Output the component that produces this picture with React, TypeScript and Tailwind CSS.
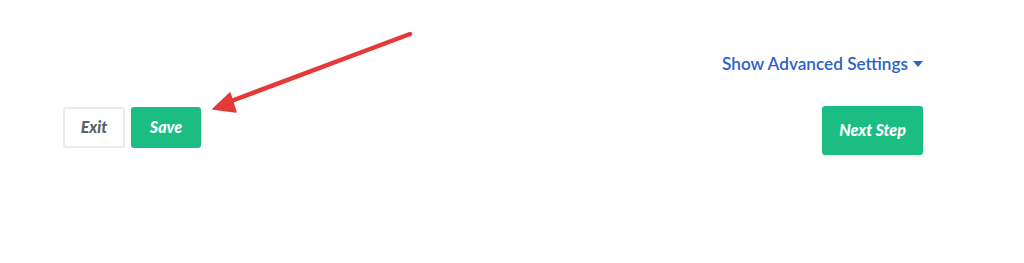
import React from "react";

export default function App() {
  return (
    <div className="relative h-[263px] w-[1024px] bg-white" style={{ fontFamily: "Lato, 'Open Sans', sans-serif" }}>
      <div className="ml-[63px] w-[860px] pt-[51px]">
        <div className="flex justify-end">
          <button className="flex items-center gap-[5px] text-[17.2px] font-semibold text-[#2b63c6]">
            Show Advanced Settings
            <svg width="10" height="6" viewBox="0 0 10 6" className="mt-[1px]">
              <path d="M0 0h10L5 6z" fill="#2b63c6" />
            </svg>
          </button>
        </div>
        <div className="mt-[29px] flex items-start justify-between">
          <div className="mt-[1px] flex gap-[6px]">
            <button className="h-[41px] w-[62px] rounded-[3px] border-2 border-[#e6edf3] text-[16px] font-black italic text-[#58616c]">
              Exit
            </button>
            <button className="h-[41px] w-[70px] rounded-[3px] bg-[#1bbd82] text-[16px] font-black italic text-white">
              Save
            </button>
          </div>
          <button className="h-[49px] w-[101px] rounded-[3px] bg-[#1bbd82] text-[16px] font-black italic text-white">
            Next Step
          </button>
        </div>
      </div>
      <svg className="pointer-events-none absolute left-0 top-0" width="1024" height="263">
        <line x1="410" y1="34" x2="226" y2="103" stroke="#e43a3a" strokeWidth="4.5" strokeLinecap="round" />
        <path d="M213 109 L230 93 L236 112 Z" fill="#e43a3a" stroke="#e43a3a" strokeWidth="1.5" strokeLinejoin="round" />
      </svg>
    </div>
  );
}
